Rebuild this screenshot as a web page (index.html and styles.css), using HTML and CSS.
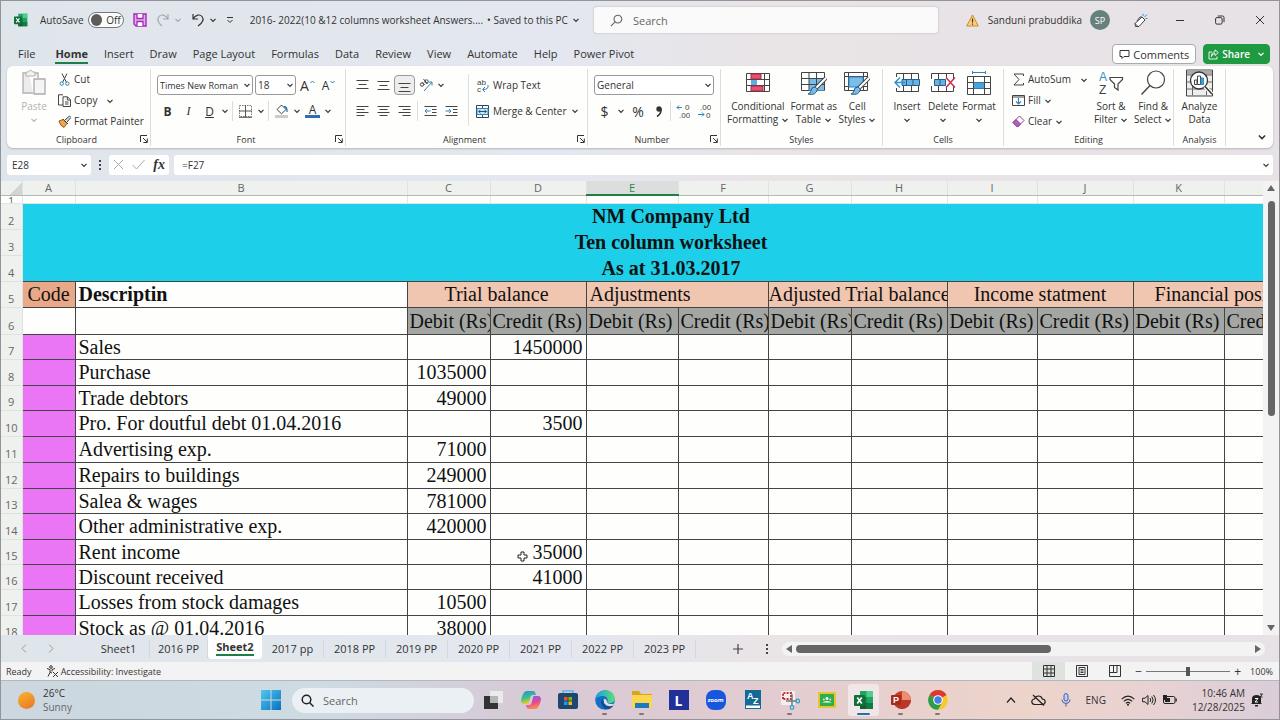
FILE: index.html
```html
<!DOCTYPE html>
<html lang="en">
<head>
    <meta charset="UTF-8">
    <title>2016- 2022(10 &amp;12 columns worksheet Answers - Excel</title>
    <link rel="stylesheet" href="styles.css">
</head>

<body>

<!-- shared icons -->
<svg class="sprite" aria-hidden="true">
    <symbol id="caret" viewBox="0 0 8 8"><path d="M1.5 2.8 4 5.3 6.5 2.8" fill="none" stroke="currentColor" stroke-width="1.2"/></symbol>
    <symbol id="launcher" viewBox="0 0 8 8"><path d="M.5 7V.5H7M3 3l4 4M7.300 3.500v4h-4" fill="none" stroke="currentColor"/></symbol>
    <symbol id="glass" viewBox="0 0 14 14"><circle cx="8.500" cy="5.500" r="4.200" fill="none" stroke="currentColor" stroke-width="1.200"/><path d="M5.500 8.500 1 13" stroke="currentColor" stroke-width="1.200"/></symbol>
    <symbol id="excel" viewBox="0 0 20 20">
        <path d="M6 1h13v18H6z" fill="#21a366"/><path d="M12.500 1H19v6h-6.500z" fill="#4fd08a"/><path d="M6 7h6.500v6H6zM12.500 13H19v6h-6.500z" fill="#107c41"/><path d="M6 13h6.500v6H6z" fill="#185c37"/>
        <rect y="5" width="11" height="11" rx="1" fill="#0f7038"/><path d="M3.200 7.500l4.600 6M7.800 7.500l-4.600 6" stroke="#fff" stroke-width="1.700"/>
    </symbol>
</svg>

<div class="window">

    <header class="titlebar">
        <div class="title-left">
            <svg class="app-icon" viewBox="0 0 20 20"><use href="#excel"/></svg>
            <label class="autosave">AutoSave <input type="checkbox"><span class="switch"><i></i>Off</span></label>
            <button class="qat save" aria-label="Save"><svg width="14" height="14" viewBox="0 0 14 14"><path d="M1 1h12v12H3l-2-2z" fill="#e7a9ef" stroke="#a02bb5" stroke-width="1.400"/><path d="M4 1v4.500h6V1M4 13V8.500h6V13" fill="#fff" stroke="#a02bb5" stroke-width="1.300"/></svg></button>
            <button class="qat muted" aria-label="Redo"><svg width="14" height="14" viewBox="0 0 14 14"><path d="M12 1v5H7M12 6C9.500 1.500 5 1 3 3.500S1.500 9 6 13" fill="none" stroke="currentColor" stroke-width="1.200"/></svg><svg class="caret"><use href="#caret"/></svg></button>
            <button class="qat" aria-label="Undo"><svg width="14" height="14" viewBox="0 0 14 14"><path d="M2 1v5h5M2 6c2.500-4.500 7-5 9-2.500S12.500 9 7 13" fill="none" stroke="currentColor" stroke-width="1.200"/></svg><svg class="caret"><use href="#caret"/></svg></button>
            <button class="qat" aria-label="Customize toolbar"><svg width="8" height="8" viewBox="0 0 8 8"><path d="M1 1.500h6M1.500 4 4 6.500 6.500 4" fill="none" stroke="currentColor"/></svg></button>
            <button class="doc-title"><span>2016- 2022(10 &amp;12 columns worksheet Answers....</span><span>• Saved to this PC</span><svg class="caret"><use href="#caret"/></svg></button>
        </div>
        <label class="search"><svg width="13" height="13"><use href="#glass"/></svg><input type="text" placeholder="Search" aria-label="Search"></label>
        <div class="title-right">
            <svg width="13" height="13" viewBox="0 0 13 13"><path d="M6.500 1 12.300 12H.7z" fill="#f8cf7e" stroke="#cf8a2c"/><path d="M6.500 4.500v4M6.500 9.500v1.200" stroke="#453312" stroke-width="1.200"/></svg>
            <span class="user">Sanduni prabuddika</span>
            <button class="avatar">SP</button>
            <button class="win" aria-label="What's new"><svg width="15" height="15" viewBox="0 0 15 15"><path d="M2 10.500 9 4l3 3-6 6.500H2.500zM2 10.500l3 3M9 4l-2 0-3 4" fill="#fff" stroke="#444"/><path d="M10 3V.8M11.500 4 14 1.500M12.500 5.500h2" stroke="#2d8fd0"/></svg></button>
            <button class="win" aria-label="Minimize"><svg width="10" height="10"><path d="M1 5.500h8" stroke="#333"/></svg></button>
            <button class="win" aria-label="Restore"><svg width="10" height="10" viewBox="0 0 10 10"><rect x=".6" y="2.600" width="6.500" height="6.500" rx="1.300" fill="none" stroke="#333"/><path d="M2.800 1h4.700Q9 1 9 2.500v4.700" fill="none" stroke="#333"/></svg></button>
            <button class="win" aria-label="Close"><svg width="10" height="10"><path d="M1 1l8 8M9 1 1 9" stroke="#333"/></svg></button>
        </div>
    </header>

    <nav class="menu">
        <button class="file">File</button>
        <button class="active">Home</button>
        <button>Insert</button>
        <button>Draw</button>
        <button>Page Layout</button>
        <button>Formulas</button>
        <button>Data</button>
        <button>Review</button>
        <button>View</button>
        <button>Automate</button>
        <button>Help</button>
        <button>Power Pivot</button>
        <div class="menu-right">
            <button class="comments"><svg width="11" height="11" viewBox="0 0 11 11"><path d="M1 1.500h9v6H5L3 9.500v-2H1z" fill="none" stroke="#333"/></svg>Comments</button>
            <button class="share"><svg width="11" height="11" viewBox="0 0 11 11"><path d="M4 3H1v7h8V7.500M3.500 7.500Q4 4.500 7 4.500V6.500L10.300 3.500 7 .8v2Q3.500 3 3.500 7.500z" fill="none" stroke="#fff" stroke-width=".9"/></svg>Share<svg class="caret"><use href="#caret"/></svg></button>
        </div>
    </nav>

    <section class="ribbon">
        <div class="group clipboard">
            <div class="tools">
                <button class="big paste"><svg width="26" height="28" viewBox="0 0 26 28"><path d="M8 4H2v20h10M17 9V4h-5" fill="#ececec" stroke="#b3b3b3" stroke-width="1.400"/><path d="M5 7V3h2.500q2-4 4 0H14v4z" fill="#f3f3f3" stroke="#b3b3b3"/><path d="M13 10h11v15H13z" fill="#f5f5f5" stroke="#aaa" stroke-width="1.300"/></svg>Paste<svg class="caret"><use href="#caret"/></svg></button>
                <div class="stack">
                    <button><svg width="13" height="13" viewBox="0 0 13 13"><path d="M4 .5l4.500 9M9 .5l-4.500 9" stroke="#444" fill="none"/><circle cx="3.700" cy="10.600" r="1.700" fill="none" stroke="#2d86bd"/><circle cx="9.300" cy="10.600" r="1.700" fill="none" stroke="#2d86bd"/></svg>Cut</button>
                    <button><svg width="13" height="13" viewBox="0 0 13 13"><path d="M5 11H.5V.8H5M5 2.800h4.500l3 3v6.700H5zM9.300 3v3h3M7 8h3.500M7 10h3.500" fill="none" stroke="#444"/></svg>Copy <svg class="caret far"><use href="#caret"/></svg></button>
                    <button><svg width="13" height="13" viewBox="0 0 13 13"><path d="M1 6l4-1.500L9 8.500 6 12.500Q2 11 1 6z" fill="#f3a64a" stroke="#9c5c1a"/><path d="M5 4l5 5M7 5l4.500-4L13 2.500 9 7" fill="#ddd" stroke="#444"/></svg>Format Painter</button>
                </div>
            </div>
            <footer>Clipboard<svg class="launch"><use href="#launcher"/></svg></footer>
        </div>

        <div class="group font">
            <div class="tools rows">
                <div class="line">
                    <span class="combo face"><select aria-label="Font"><option>Times New Roman</option></select><svg class="caret"><use href="#caret"/></svg></span>
                    <span class="combo size"><select aria-label="Font size"><option>18</option></select><svg class="caret"><use href="#caret"/></svg></span>
                    <button class="ic grow">A<svg width="5" height="12"><path d="M.5 4 2.500 2l2 2" fill="none" stroke="#2d86bd"/></svg></button>
                    <button class="ic">A<svg width="5" height="12"><path d="M.5 2l2 2 2-2" fill="none" stroke="#2d86bd"/></svg></button>
                </div>
                <div class="line">
                    <button class="ic"><b>B</b></button>
                    <button class="ic italic">I</button>
                    <button class="ic underline">D</button>
                    <button class="drop" aria-label="Underline options"><svg class="caret"><use href="#caret"/></svg></button>
                    <span class="sep"></span>
                    <button class="ic" aria-label="Borders"><svg width="13" height="13" viewBox="0 0 13 13"><path d="M.5.5h12v11H.5z" fill="none" stroke="#777" stroke-dasharray="1.500 1"/><path d="M6.500 0v12M0 6h13M0 12.300h13" stroke="#555"/></svg></button>
                    <button class="drop" aria-label="Border options"><svg class="caret"><use href="#caret"/></svg></button>
                    <span class="sep"></span>
                    <button class="ic" aria-label="Fill color"><svg width="14" height="14" viewBox="0 0 14 14"><path d="M6.500 1 11 5.500 6.500 9.800 2 5.500z" fill="#fff" stroke="#444"/><path d="M9 2.500q3.500.5 3 5.500" fill="none" stroke="#2778ae" stroke-width="1.300"/><path d="M0 11h13v3H0z" fill="#ccc"/></svg></button>
                    <button class="drop" aria-label="Fill options"><svg class="caret"><use href="#caret"/></svg></button>
                    <button class="ic fontcolor">A</button>
                    <button class="drop" aria-label="Font color options"><svg class="caret"><use href="#caret"/></svg></button>
                </div>
            </div>
            <footer>Font<svg class="launch"><use href="#launcher"/></svg></footer>
        </div>

        <div class="group align">
            <div class="tools">
                <div class="rows">
                    <div class="line">
                        <button class="ic" aria-label="Top align"><svg width="13" height="13"><path d="M.5 1.500h12M2.500 5.500h8M.5 9.500h12" stroke="#444"/></svg></button>
                        <button class="ic" aria-label="Middle align"><svg width="13" height="13"><path d="M.5 2.500h12M2.500 6.500h8M.5 10.500h12" stroke="#444"/></svg></button>
                        <button class="ic pressed" aria-label="Bottom align"><svg width="13" height="13"><path d="M.5 4.500h12M2.500 8.500h8M.5 12.500h12" stroke="#444"/></svg></button>
                        <button class="ic" aria-label="Orientation"><svg width="14" height="14" viewBox="0 0 14 14"><circle cx="3" cy="6.500" r="1.700" fill="none" stroke="#444"/><path d="M3.500 4.200 5.500 7M4.500 1l4 5" stroke="#444"/><circle cx="7.500" cy="3.500" r="1.700" fill="none" stroke="#444"/><path d="M5 13 13 4M9.500 4H13v3.500" fill="none" stroke="#2d86bd"/></svg></button>
                        <button class="drop" aria-label="Orientation options"><svg class="caret"><use href="#caret"/></svg></button>
                    </div>
                    <div class="line">
                        <button class="ic" aria-label="Align left"><svg width="13" height="13"><path d="M.5 1.500h12M.5 4.500h8M.5 7.500h12M.5 10.500h8" stroke="#444"/></svg></button>
                        <button class="ic" aria-label="Center"><svg width="13" height="13"><path d="M.5 1.500h12M2.500 4.500h8M.5 7.500h12M2.500 10.500h8" stroke="#444"/></svg></button>
                        <button class="ic" aria-label="Align right"><svg width="13" height="13"><path d="M.5 1.500h12M4.500 4.500h8M.5 7.500h12M4.500 10.500h8" stroke="#444"/></svg></button>
                        <span class="sep"></span>
                        <button class="ic" aria-label="Decrease indent"><svg width="13" height="13"><path d="M.5 1.500h12M8 4.500h4.500M8 7.500h4.500M.5 10.500h12" stroke="#444"/><path d="M6.500 6H1M3 4 1 6l2 2" fill="none" stroke="#2d86bd"/></svg></button>
                        <button class="ic" aria-label="Increase indent"><svg width="13" height="13"><path d="M.5 1.500h12M8 4.500h4.500M8 7.500h4.500M.5 10.500h12" stroke="#444"/><path d="M.5 6H6M4 4l2 2-2 2" fill="none" stroke="#2d86bd"/></svg></button>
                    </div>
                </div>
                <span class="sep tall"></span>
                <div class="rows wide">
                    <div class="line"><button><svg width="13" height="13" viewBox="0 0 13 13"><text x="1" y="6" font-size="8" fill="#444">ab</text><text x="1" y="13" font-size="8" fill="#444">c</text><path d="M12 6q1 4.500-5 4.500M9 8l-2.500 2.500L9 13" fill="none" stroke="#2d86bd"/></svg>Wrap Text</button></div>
                    <div class="line"><button><svg width="13" height="13" viewBox="0 0 13 13"><path d="M.5.5h12v12H.5z" fill="#fff" stroke="#345"/><path d="M1 3.500h11v6H1z" fill="#cfe8f5" stroke="#2d86bd"/><path d="M2.500 6.500h8M4.500 4.800 2.800 6.500l1.700 1.700M8.500 4.800l1.700 1.700-1.700 1.700M6.500 1v2M6.500 10v2" fill="none" stroke="#27516e"/></svg>Merge &amp; Center <svg class="caret"><use href="#caret"/></svg></button></div>
                </div>
            </div>
            <footer>Alignment<svg class="launch"><use href="#launcher"/></svg></footer>
        </div>

        <div class="group number">
            <div class="tools rows">
                <div class="line"><span class="combo format"><select aria-label="Number format"><option>General</option></select><svg class="caret"><use href="#caret"/></svg></span></div>
                <div class="line">
                    <button class="ic sym">$</button>
                    <button class="drop" aria-label="Accounting options"><svg class="caret"><use href="#caret"/></svg></button>
                    <button class="ic sym">%</button>
                    <button class="ic" aria-label="Comma style"><svg width="8" height="13" viewBox="0 0 8 13"><circle cx="4" cy="4" r="2.700" fill="#333"/><path d="M6 3.500q.8 5-4 8" fill="none" stroke="#333" stroke-width="1.500"/></svg></button>
                    <span class="sep"></span>
                    <button class="ic" aria-label="Increase decimal"><svg width="14" height="14" viewBox="0 0 14 14"><path d="M6 3.500H1M3 1.500l-2 2 2 2" fill="none" stroke="#2d86bd"/><text x="9" y="6" font-size="8" fill="#444">0</text><text x="3" y="14" font-size="8" fill="#444">.00</text></svg></button>
                    <button class="ic" aria-label="Decrease decimal"><svg width="14" height="14" viewBox="0 0 14 14"><path d="M1 10.500h6M5 8.500l2 2-2 2" fill="none" stroke="#2d86bd"/><text x="3" y="6" font-size="8" fill="#444">.00</text><text x="9" y="14" font-size="8" fill="#444">0</text></svg></button>
                </div>
            </div>
            <footer>Number<svg class="launch"><use href="#launcher"/></svg></footer>
        </div>

        <div class="group styles">
            <div class="tools">
                <button class="big"><svg width="24" height="22" viewBox="0 0 24 22"><path d="M.5 1.500h23v18H.5z" fill="#fff" stroke="#444"/><path d="M.5 7.500h23M.5 13.500h23M5.500 1v18M18.500 1v18" stroke="#444"/><path d="M5 2h10v5H5zM5 14h12v5H5z" fill="#e85070" stroke="#a22a48"/><path d="M5 8h6v5H5z" fill="#5aaee0"/></svg><span>Conditional<br>Formatting <svg class="caret"><use href="#caret"/></svg></span></button>
                <button class="big"><svg width="26" height="24" viewBox="0 0 26 24"><path d="M.5 1.500h23v18H.5z" fill="#fff" stroke="#444"/><path d="M8 7.500h15v12H8z" fill="#79bdea"/><path d="M.5 7.500h23M.5 13.500h23M8 1v18M15.500 1v18" stroke="#444"/><path d="M25 7 14 18" stroke="#444" stroke-width="4"/><path d="M25 7 14 18" stroke="#fff" stroke-width="2.200"/><path d="M14 16q-4 0-4 4-1 2.500-3 3 8 2 9.500-5z" fill="#79bdea" stroke="#255f8a"/></svg><span>Format as<br>Table <svg class="caret"><use href="#caret"/></svg></span></button>
                <button class="big"><svg width="26" height="24" viewBox="0 0 26 24"><path d="M.5 1.500h23v18H.5z" fill="#fff" stroke="#444"/><path d="M.5 5.500h23M4.500 1v18M19.500 1v18M.5 15.500h23" stroke="#444"/><path d="M5 6h14v10H5z" fill="#79bdea" stroke="#2d86bd"/><path d="M25 7 14 18" stroke="#444" stroke-width="4"/><path d="M25 7 14 18" stroke="#fff" stroke-width="2.200"/><path d="M14 16q-4 0-4 4-1 2.500-3 3 8 2 9.500-5z" fill="#79bdea" stroke="#255f8a"/></svg><span>Cell<br>Styles <svg class="caret"><use href="#caret"/></svg></span></button>
            </div>
            <footer>Styles</footer>
        </div>

        <div class="group cells">
            <div class="tools">
                <button class="big"><svg width="26" height="22" viewBox="0 0 26 22"><path d="M2.500 1.500h22v18h-22zM9.500 1v18M17.500 1v18" fill="#fff" stroke="#444"/><path d="M8 7.500h17.500v6H8z" fill="#66b4e6" stroke="#2a5d80"/><path d="M12.500 7.500v6M19 7.500v6" stroke="#2a5d80"/><path d="M0 5h7v11H0z" fill="#fff"/><path d="M11 10.500H1M6 5.500l-5 5 5 5" fill="none" stroke="#2d93cf" stroke-width="1.500"/></svg><span>Insert<br><svg class="caret"><use href="#caret"/></svg></span></button>
                <button class="big"><svg width="26" height="22" viewBox="0 0 26 22"><path d="M1.500 1.500h22v18h-22zM8.500 1v18M16.500 1v18" fill="#fff" stroke="#444"/><path d="M0 7h24v7H0z" fill="#fff"/><path d="M4.500 7.500h11v6h-11zM10 7.500v6" fill="#66b4e6" stroke="#2a5d80"/><path d="M16 5.500l9 10M25 5.500l-9 10" stroke="#c8324f" stroke-width="1.500"/></svg><span>Delete<br><svg class="caret"><use href="#caret"/></svg></span></button>
                <button class="big"><svg width="24" height="24" viewBox="0 0 24 24"><path d="M.5 5.500h23v18H.5zM.5 11.500h23M.5 17.500h23M6.500 5v18M17.500 5v18" fill="#fff" stroke="#444"/><path d="M7 11.500h10v6H7z" fill="#45a5e2"/><path d="M5.500 1.500h13M5.500 0v3M18.500 0v3" stroke="#2d86bd"/></svg><span>Format<br><svg class="caret"><use href="#caret"/></svg></span></button>
            </div>
            <footer>Cells</footer>
        </div>

        <div class="group editing">
            <div class="tools">
                <div class="stack">
                    <button><svg width="13" height="13" viewBox="0 0 13 13"><path d="M11.500 3V1H2l5 5.500L2 12h9.500v-2" fill="none" stroke="#444"/></svg>AutoSum <svg class="caret far"><use href="#caret"/></svg></button>
                    <button><svg width="13" height="13" viewBox="0 0 13 13"><path d="M.5 1.500h12v10H.5zM.5 3h12" fill="#fff" stroke="#444"/><path d="M6.500 4v6M4 7.500 6.500 10 9 7.500" fill="none" stroke="#2d86bd" stroke-width="1.200"/></svg>Fill <svg class="caret"><use href="#caret"/></svg></button>
                    <button><svg width="13" height="13" viewBox="0 0 13 13"><path d="M7.500 1 12 5.500 5.500 12 1 7.500z" fill="#fff" stroke="#8a3a9c"/><path d="M4 4.500 8.500 9l-3 3L1 7.500z" fill="#b55cc6" stroke="#8a3a9c"/></svg>Clear <svg class="caret"><use href="#caret"/></svg></button>
                </div>
                <button class="big"><svg width="26" height="24" viewBox="0 0 26 24"><text x="1" y="10" font-size="12" fill="#2d93cf">A</text><text x="1" y="23" font-size="12" fill="#444">Z</text><path d="M12 6.500h12.500v2L20 13v6l-3.500-2.500V13L12 8.500z" fill="#fff" stroke="#444" stroke-width="1.200"/></svg><span>Sort &amp;<br>Filter <svg class="caret"><use href="#caret"/></svg></span></button>
                <button class="big"><svg width="26" height="26" viewBox="0 0 26 26"><circle cx="16" cy="9.500" r="8.500" fill="#fff" stroke="#444" stroke-width="1.200"/><path d="M10 15.500 1.500 24.500" stroke="#444" stroke-width="1.400"/></svg><span>Find &amp;<br>Select <svg class="caret"><use href="#caret"/></svg></span></button>
            </div>
            <footer>Editing</footer>
        </div>

        <div class="group analysis">
            <div class="tools">
                <button class="big"><svg width="27" height="27" viewBox="0 0 27 27"><path d="M.5.500h26v26H.5z" fill="#eee" stroke="#444"/><path d="M1 1h25v4H1z" fill="#aaa"/><path d="M.5 5.500h26M.5 12.500h26M.5 19.500h26M6.500 5v21M20.500 5v21" stroke="#666"/><circle cx="13" cy="11" r="8.500" fill="#fff" stroke="#333" stroke-width="1.300"/><path d="M19 17l7 7.500" stroke="#fff" stroke-width="4"/><path d="M19 17l7 7.500" stroke="#333" stroke-width="1.500"/><path d="M8.500 10.500h2.500V15H8.500z" fill="#fff" stroke="#444"/><path d="M11.500 6.500h3V15h-3z" fill="#fff" stroke="#444"/><path d="M15 8.500h2.500V15H15z" fill="#45a5e2" stroke="#2d86bd"/></svg><span>Analyze<br>Data</span></button>
            </div>
            <footer>Analysis</footer>
        </div>
        <button class="collapse" aria-label="Collapse ribbon"><svg width="10" height="10" viewBox="0 0 8 8"><use href="#caret"/></svg></button>
    </section>

    <div class="formula-bar">
        <span class="combo namebox"><input type="text" value="E28" aria-label="Name box"><svg class="caret"><use href="#caret"/></svg></span>
        <span class="dots"></span>
        <div class="fx">
            <button aria-label="Cancel"><svg width="11" height="11"><path d="M1 1l9 9M10 1l-9 9" stroke="#aaa"/></svg></button>
            <button aria-label="Enter"><svg width="13" height="11"><path d="M.5 6 4.500 10 12.500 1" fill="none" stroke="#aaa"/></svg></button>
            <button class="fn">fx</button>
        </div>
        <span class="combo formula"><input type="text" value="=F27" aria-label="Formula"><svg class="caret"><use href="#caret"/></svg></span>
    </div>

    <main class="sheet">
        <div class="grid-area">
            <table class="grid">
                <colgroup>
                    <col class="w-num"><col class="w-a"><col class="w-b"><col class="w-c"><col class="w-d"><col class="w-e"><col class="w-f"><col class="w-c"><col class="w-d"><col class="w-f"><col class="w-d"><col class="w-k"><col class="w-d">
                </colgroup>
                <thead>
                    <tr><th class="corner"></th><th>A</th><th>B</th><th>C</th><th>D</th><th class="current">E</th><th>F</th><th>G</th><th>H</th><th>I</th><th>J</th><th>K</th><th>L</th></tr>
                </thead>
                <tbody>
                    <tr class="first"><th>1</th><td></td><td></td><td></td><td></td><td></td><td></td><td></td><td></td><td></td><td></td><td></td><td></td></tr>
                    <tr class="heading"><th>2</th><td colspan="12">NM Company Ltd</td></tr>
                    <tr class="heading"><th>3</th><td colspan="12">Ten column worksheet</td></tr>
                    <tr class="heading last"><th>4</th><td colspan="12">As at 31.03.2017</td></tr>
                    <tr class="sections"><th>5</th><td class="code">Code</td><td class="desc">Descriptin</td><td colspan="2">Trial balance</td><td colspan="2" class="left">Adjustments</td><td colspan="2" class="tight">Adjusted Trial balance</td><td colspan="2">Income statment</td><td colspan="2">Financial position</td></tr>
                    <tr class="sides"><th>6</th><td></td><td></td><td>Debit (Rs)</td><td>Credit (Rs)</td><td>Debit (Rs)</td><td>Credit (Rs)</td><td>Debit (Rs)</td><td>Credit (Rs)</td><td>Debit (Rs)</td><td>Credit (Rs)</td><td>Debit (Rs)</td><td>Credit (Rs)</td></tr>
                    <tr><th>7</th><td></td><td>Sales</td><td></td><td>1450000</td><td></td><td></td><td></td><td></td><td></td><td></td><td></td><td></td></tr>
                    <tr class="high"><th>8</th><td></td><td>Purchase</td><td>1035000</td><td></td><td></td><td></td><td></td><td></td><td></td><td></td><td></td><td></td></tr>
                    <tr><th>9</th><td></td><td>Trade debtors</td><td>49000</td><td></td><td></td><td></td><td></td><td></td><td></td><td></td><td></td><td></td></tr>
                    <tr class="high"><th>10</th><td></td><td>Pro. For doutful debt 01.04.2016</td><td></td><td>3500</td><td></td><td></td><td></td><td></td><td></td><td></td><td></td><td></td></tr>
                    <tr class="high"><th>11</th><td></td><td>Advertising exp.</td><td>71000</td><td></td><td></td><td></td><td></td><td></td><td></td><td></td><td></td><td></td></tr>
                    <tr class="high"><th>12</th><td></td><td>Repairs to buildings</td><td>249000</td><td></td><td></td><td></td><td></td><td></td><td></td><td></td><td></td><td></td></tr>
                    <tr><th>13</th><td></td><td>Salea &amp; wages</td><td>781000</td><td></td><td></td><td></td><td></td><td></td><td></td><td></td><td></td><td></td></tr>
                    <tr class="high"><th>14</th><td></td><td>Other administrative exp.</td><td>420000</td><td></td><td></td><td></td><td></td><td></td><td></td><td></td><td></td><td></td></tr>
                    <tr><th>15</th><td></td><td>Rent income</td><td></td><td>35000</td><td></td><td></td><td></td><td></td><td></td><td></td><td></td><td></td></tr>
                    <tr><th>16</th><td></td><td>Discount received</td><td></td><td>41000</td><td></td><td></td><td></td><td></td><td></td><td></td><td></td><td></td></tr>
                    <tr class="high"><th>17</th><td></td><td>Losses from stock damages</td><td>10500</td><td></td><td></td><td></td><td></td><td></td><td></td><td></td><td></td><td></td></tr>
                    <tr><th>18</th><td></td><td>Stock as @ 01.04.2016</td><td>38000</td><td></td><td></td><td></td><td></td><td></td><td></td><td></td><td></td><td></td></tr>
                </tbody>
            </table>
            <svg class="cursor" width="11" height="11" viewBox="0 0 11 11"><path d="M4 1h3v3h3v3H7v3H4V7H1V4h3z" fill="#fff" stroke="#222"/></svg>
        </div>
        <div class="vscroll"><svg width="8" height="6"><path d="M4 0l4 6H0z" fill="#666"/></svg><span class="track"><i></i></span><svg width="8" height="6"><path d="M0 0h8L4 6z" fill="#666"/></svg></div>
    </main>

    <div class="sheet-tabs">
        <div class="arrows"><button aria-label="Previous sheet"><svg width="6" height="9"><path d="M5 .5l-4 4 4 4" fill="none" stroke="#999"/></svg></button><button aria-label="Next sheet"><svg width="6" height="9"><path d="M1 .5l4 4-4 4" fill="none" stroke="#999"/></svg></button></div>
        <button>Sheet1</button>
        <button>2016 PP</button>
        <button class="active"><span>Sheet2</span></button>
        <button>2017 pp</button>
        <button>2018 PP</button>
        <button>2019 PP</button>
        <button>2020 PP</button>
        <button>2021 PP</button>
        <button>2022 PP</button>
        <button>2023 PP</button>
        <button class="add" aria-label="New sheet"><svg width="10" height="10"><path d="M5 0v10M0 5h10" stroke="#444" stroke-width="1.200"/></svg></button>
        <span class="dots"></span>
        <div class="hscroll"><svg width="6" height="8"><path d="M6 0v8L0 4z" fill="#666"/></svg><span class="track"><i></i></span><svg width="6" height="8"><path d="M0 0v8l6-4z" fill="#666"/></svg></div>
    </div>

    <div class="status">
        <span>Ready</span>
        <button class="access"><svg width="13" height="12" viewBox="0 0 13 12"><circle cx="5" cy="2" r="1.300" fill="none" stroke="#333"/><path d="M1 3.500l3 1v3l-2 4M9 3.500l-3 1v2M4 7l2 1M7 7l5 5M12 7l-5 5" fill="none" stroke="#333"/></svg>Accessibility: Investigate</button>
        <div class="views">
            <button class="on" aria-label="Normal"><svg width="12" height="12"><path d="M.5.5h11v11H.5zM4 0v12M8 0v12M0 4h12M0 8h12" fill="none" stroke="#333"/></svg></button>
            <button aria-label="Page layout"><svg width="12" height="12"><path d="M.5.5h11v11H.5zM3 2.500h6v7H3zM4.500 4.500h3M4.500 6h3M4.500 7.500h3" fill="none" stroke="#333"/></svg></button>
            <button aria-label="Page break"><svg width="12" height="12"><path d="M.5.5h11v11H.5zM.5 7.500h7.500V.5M4.500.5v7" fill="none" stroke="#333"/></svg></button>
        </div>
        <div class="zoom"><button>−</button><input type="range" min="10" max="190" value="100" aria-label="Zoom"><button>+</button></div>
        <span class="percent">100%</span>
    </div>

    <footer class="taskbar">
        <button class="weather"><i class="sun"></i><span>26°C<br><em>Sunny</em></span></button>
        <div class="apps">
            <button class="app" aria-label="Start"><svg width="20" height="20" viewBox="0 0 20 20"><defs><linearGradient id="w" x2="1" y2="1"><stop stop-color="#4fc9ee"/><stop offset="1" stop-color="#0b6fc0"/></linearGradient></defs><path d="M0 0h9.500v9.500H0zM10.500 0H20v9.500h-9.500zM0 10.500h9.500V20H0zM10.500 10.500H20V20h-9.500z" fill="url(#w)"/></svg></button>
            <label class="task-search"><svg width="13" height="13" viewBox="0 0 13 13"><circle cx="5.500" cy="5.500" r="4.300" fill="none" stroke="#222" stroke-width="1.500"/><path d="M8.700 8.700l3.800 3.800" stroke="#222" stroke-width="1.500"/></svg><input type="text" placeholder="Search" aria-label="Search Windows"></label>
            <button class="app" aria-label="Task view"><svg width="20" height="20" viewBox="0 0 20 20"><path d="M0 6h14v13H0z" fill="#333"/><path d="M6 1h13v12H6z" fill="#eee" opacity=".9"/><path d="M6 6h8v7H6z" fill="#b5b5b5"/></svg></button>
            <button class="app" aria-label="Copilot"><svg width="20" height="20" viewBox="0 0 20 20"><defs><linearGradient id="c1" x2=".3" y2="1"><stop stop-color="#1f8ee8"/><stop offset=".6" stop-color="#42c47c"/><stop offset="1" stop-color="#f4c92d"/></linearGradient><linearGradient id="c2" x2=".3" y2="1"><stop stop-color="#7a5cf0"/><stop offset=".6" stop-color="#e5489a"/><stop offset="1" stop-color="#fa8a4a"/></linearGradient></defs><path d="M6 1h6q2 0 2.500 2L15 5h-3q-2 0-2.500 2L7.500 14H3Q0 14 0 10.500 1 5 3 2.500 4 1 6 1z" fill="url(#c1)"/><path d="M14 19H8q-2 0-2.500-2L5 15h3q2 0 2.500-2l2-7H17q3 0 3 3.500-1 5.500-3 8-1 1.500-3 1.500z" fill="url(#c2)"/></svg></button>
            <button class="app" aria-label="Store"><svg width="20" height="20" viewBox="0 0 20 20"><path d="M5 5V1h10v4" fill="none" stroke="#55b6e8" stroke-width="1.600"/><rect y="3" width="20" height="16" rx="2" fill="#1d4770"/><path d="M6 7h3.500v3.500H6z" fill="#f25022"/><path d="M10.500 7H14v3.500h-3.500z" fill="#7fba00"/><path d="M6 11.500h3.500V15H6z" fill="#00a4ef"/><path d="M10.500 11.500H14V15h-3.500z" fill="#ffb900"/></svg></button>
            <button class="app run" aria-label="Edge"><svg width="20" height="20" viewBox="0 0 20 20"><defs><linearGradient id="e" x2="1"><stop stop-color="#1b9de2"/><stop offset="1" stop-color="#5ddf73"/></linearGradient></defs><circle cx="10" cy="10" r="9.800" fill="#1470c4"/><path d="M.4 9C1.500-2 19-3 19.800 8.500 20 13 15 14 12 12.500c2-4-1-6.500-4-6.500C4 6 1 8 .4 9z" fill="url(#e)"/><path d="M7.500 8.500C4 12 7 19 13 19.300 16 19 18 16.500 18.500 15c-4 2-10 1-9.500-4.500z" fill="#0d4f9c"/><path d="M8.500 9.500q3-2 3.500 3 3 2.500 7 1l-.7 2q-6 2-9-2z" fill="#e9dce0"/></svg></button>
            <button class="app run" aria-label="File Explorer"><svg width="20" height="20" viewBox="0 0 20 20"><path d="M0 1h7l2 3h11v14H0z" fill="#d9a41e"/><path d="M0 5h20v13H0z" fill="#fbd64e"/><path d="M3 13h14v5H3z" fill="#1d78c2"/></svg></button>
            <button class="app" aria-label="L"><span class="tile blue">L</span></button>
            <button class="app" aria-label="Zoom"><span class="tile zoomapp">zoom</span></button>
            <button class="app" aria-label="Dictionary"><svg width="16" height="20" viewBox="0 0 16 20"><path d="M0 0h16v19H0z" fill="#146a96"/><path d="M1 15.500h14V18H1z" fill="#fff"/><text x="2" y="9" font-size="9" font-weight="700" fill="#fff">A</text><text x="8" y="14" font-size="9" font-weight="700" fill="#fff">Z</text></svg></button>
            <button class="app run" aria-label="Snipping Tool"><svg width="20" height="20" viewBox="0 0 20 20"><rect x="1" y="1" width="14" height="14" rx="1" fill="#f5f0f0"/><path d="M3 9V3h8v6H3z" fill="none" stroke="#c4303a" stroke-width="2" stroke-dasharray="2 1.200"/><path d="M12 4v11M6 11h11" stroke="#777" stroke-width="1.500"/><circle cx="17.700" cy="11" r="1.800" fill="none" stroke="#2c9fd0" stroke-width="1.200"/><circle cx="12" cy="17.500" r="1.800" fill="none" stroke="#2c9fd0" stroke-width="1.200"/></svg></button>
            <button class="app" aria-label="Classroom"><svg width="18" height="16" viewBox="0 0 18 16"><path d="M0 0h18v16H0z" fill="#e8c52a"/><path d="M2 2h14v12H2z" fill="#2fae4e"/><circle cx="9" cy="6.500" r="1.400" fill="#fff"/><circle cx="5.800" cy="7.500" r="1" fill="#cfeecf"/><circle cx="12.200" cy="7.500" r="1" fill="#cfeecf"/><path d="M4 10.500q5-3 10 0z" fill="#fff"/></svg></button>
            <button class="app run current" aria-label="Excel"><svg width="20" height="20"><use href="#excel"/></svg></button>
            <button class="app run" aria-label="PowerPoint"><svg width="20" height="20" viewBox="0 0 20 20"><circle cx="11" cy="10" r="9" fill="#c43e2c"/><path d="M11 1a9 9 0 0 1 9 9h-9z" fill="#f08b72"/><path d="M2 10h18a9 9 0 0 1-18 0z" fill="#b8382c"/><rect y="5" width="10" height="10" rx="1" fill="#a82a1e"/><text x="2" y="13" font-size="9" font-weight="700" fill="#fff">P</text></svg></button>
            <button class="app run" aria-label="Chrome"><svg width="20" height="20" viewBox="0 0 20 20"><circle cx="10" cy="10" r="9.800" fill="#f8c92b"/><path d="M10 10 1.500 5A9.800 9.800 0 0 1 18.500 5z" fill="#dc3a30"/><path d="M10 10 1.500 5A9.800 9.800 0 0 0 10 19.800l4-7z" fill="#2f9c4b"/><circle cx="10" cy="10" r="4.800" fill="#fff"/><circle cx="10" cy="10" r="3.700" fill="#3f7fe8"/></svg></button>
        </div>
        <div class="tray">
            <button aria-label="Hidden icons"><svg width="10" height="6"><path d="M1 5.500 5 1l4 4.500" fill="none" stroke="#222" stroke-width="1.200"/></svg></button>
            <button aria-label="OneDrive"><svg width="15" height="12" viewBox="0 0 15 12"><path d="M3.500 10.500Q.7 10 .8 7.500 1 5.300 3.500 5 4.500 2 7.500 2q3 0 3.800 3 2.900.3 2.900 2.800 0 2.500-2.700 2.700zM2 1l11 10.500" fill="none" stroke="#222" stroke-width="1.200"/></svg></button>
            <button aria-label="Microphone"><svg width="10" height="14" viewBox="0 0 10 14"><rect x="3" y=".6" width="4" height="7.500" rx="2" fill="#bcd0f0" stroke="#3a5fae"/><path d="M.8 6.500q.5 4 4.200 4t4.200-4M5 10.500v3" fill="none" stroke="#3a5fae"/></svg></button>
            <button class="lang">ENG</button>
            <button class="net" aria-label="Network"><svg width="14" height="11" viewBox="0 0 14 11"><path d="M.7 4.200q6.300-6 12.600 0M2.800 6.400q4.200-4 8.400 0M4.800 8.400q2.200-2 4.400 0" fill="none" stroke="#222" stroke-width="1.100"/><circle cx="7" cy="9.800" r="1" fill="#222"/></svg><svg width="14" height="12" viewBox="0 0 14 12"><path d="M.6 4.200H3L6 1.500v9L3 7.800H.6zM8 4q1.500 2 0 4M9.800 2.500q2.700 3.500 0 7M11.500 1q4 5 0 10" fill="none" stroke="#222"/></svg><svg width="14" height="10" viewBox="0 0 14 10"><rect x=".5" y="1.500" width="11.500" height="7" rx="1.500" fill="none" stroke="#222"/><path d="M2 3h5v4H2zM12.500 3.500h1.300v3h-1.300zM0 0h4v5H0z" fill="#222"/></svg></button>
            <button class="clock">10:46 AM<br>12/28/2025</button>
            <button aria-label="Notifications"><svg width="12" height="14" viewBox="0 0 12 14"><path d="M1 10V5.500Q1 2 5.500 2T10 5.500V10l1 1H0zM4 12h3v1.500H4z" fill="#222"/><path d="M4 5.500h3L4 9h3" fill="none" stroke="#fff"/><path d="M9 1h2.500L9 4h2.500" fill="none" stroke="#222"/></svg></button>
        </div>
    </footer>

</div>

</body>
</html>
```
FILE: styles.css
```css
* {
    box-sizing: border-box;
}

body {
    margin: 0;
    font-family: "Open Sans", "Noto Sans", sans-serif;
    font-size: 11px;
    color: #333;
}

button,
input,
select {
    font: inherit;
    color: inherit;
    border: 0;
    padding: 0;
    margin: 0;
    background: none;
}

button {
    display: flex;
    align-items: center;
    white-space: nowrap;
}

input {
    min-width: 0;
    outline: none;
}

svg {
    flex: none;
    display: block;
}

svg text {
    font-family: "Liberation Sans", sans-serif;
}

.sprite {
    position: absolute;
    width: 0;
    height: 0;
}

.caret {
    width: 8px;
    height: 8px;
}

.window {
    display: flex;
    flex-direction: column;
    height: 100vh;
    overflow: hidden;
    border: 1px solid #92949a;
    background: linear-gradient(90deg, #dfe6eb 0%, #e4e7ef 45%, #e9e4e6 60%, #e6e2e6 100%);
}

/* title bar */
.titlebar {
    flex: none;
    display: flex;
    align-items: center;
    height: 38px;
    padding: 0 13px;
}

.title-left {
    display: flex;
    align-items: center;
    width: 580px;
    font-size: 10px;
}

.app-icon {
    width: 14px;
    height: 14px;
    margin-right: 12px;
}

.autosave {
    display: flex;
    align-items: center;
    gap: 4px;
}

.autosave input {
    position: absolute;
    opacity: 0;
}

.switch {
    display: flex;
    align-items: center;
    gap: 4px;
    width: 36px;
    height: 16px;
    padding: 0 2px;
    border: 1px solid #777;
    border-radius: 8px;
    background: #fbfbfb;
}

.switch i {
    width: 12px;
    height: 12px;
    border-radius: 50%;
    background: #5c5c5c;
}

.qat {
    gap: 4px;
    margin-left: 9px;
}

.qat.muted {
    color: #a3a8ad;
}

.doc-title {
    gap: 4px;
    margin-left: 16px;
}

.search {
    display: flex;
    align-items: center;
    gap: 10px;
    flex: 0 1 344px;
    height: 26px;
    padding: 0 16px;
    border-radius: 3px;
    background: #fafafb;
    box-shadow: 0 0 2px #aaa;
    color: #666;
}

.search input {
    flex: 1;
}

::placeholder {
    color: #666;
    opacity: 1;
}

.title-right {
    display: flex;
    align-items: center;
    justify-content: flex-end;
    flex: 1;
}

.user {
    margin: 0 8px 0 9px;
    font-size: 10px;
}

.avatar {
    justify-content: center;
    width: 20px;
    height: 20px;
    margin-right: 10px;
    border-radius: 50%;
    background: #66807b;
    color: #fff;
    font-size: 9px;
}

.win {
    justify-content: center;
    width: 40px;
    height: 24px;
}

.win:last-child {
    margin-right: -14px;
}

/* menu tabs */
.menu {
    flex: none;
    display: flex;
    align-items: center;
    gap: 16px;
    height: 27px;
    padding: 3px 9px 0 17px;
}

.menu > button {
    height: 20px;
    border-bottom: 2px solid transparent;
}

.menu > .file {
    margin-right: 4px;
}

.menu > .active {
    font-weight: 700;
    border-color: #1e7e45;
}

.menu-right {
    display: flex;
    gap: 7px;
    margin-left: auto;
}

.comments,
.share {
    height: 20px;
    gap: 3px;
    padding: 0 6px;
    border: 1px solid #aaa;
    border-radius: 4px;
    background: #fff;
}

.share {
    padding: 0 4px;
    border-color: #1f9a42;
    background: #1f9a42;
    color: #fff;
    font-size: 10px;
    font-weight: 600;
}

.share .caret {
    margin-left: 4px;
}

/* ribbon */
.ribbon {
    flex: none;
    display: grid;
    grid-template-columns: 144px 195px 242px 133px 162px 121px 170px 52px 1fr;
    height: 82px;
    margin: 0 6px;
    border-radius: 6px;
    background: #fefefc;
    box-shadow: 0 1px 2px #b5b5bb;
    font-size: 10px;
    line-height: 13px;
}

.group {
    display: flex;
    flex-direction: column;
    justify-content: space-between;
    margin: 3px 0 4px;
    padding: 0 6px;
    border-right: 1px solid #ddd;
}

.group footer {
    display: grid;
    grid-template-columns: 1fr auto;
    align-items: center;
    height: 14px;
    font-size: 9px;
    text-align: center;
    white-space: nowrap;
}

.launch {
    width: 8px;
    height: 8px;
    margin-right: -4px;
}

.tools {
    display: flex;
}

.stack {
    display: flex;
    flex-direction: column;
}

.stack button {
    height: 21px;
    gap: 3px;
}

.far {
    margin-left: 6px;
}

.rows {
    display: flex;
    flex-direction: column;
    gap: 6px;
    padding-top: 6px;
}

.line {
    display: flex;
    align-items: center;
    height: 20px;
}

.line button {
    gap: 4px;
}

.line .ic {
    gap: 1px;
}

.ic {
    justify-content: center;
    width: 21px;
    height: 20px;
    font-size: 12px;
}

.drop {
    justify-content: center;
    width: 10px;
    height: 20px;
}

.sep {
    width: 1px;
    height: 20px;
    margin: 0 2px;
    background: #ddd;
}

.tall {
    height: 52px;
    margin: 5px 7px 0 6px;
}

.pressed {
    border: 1px solid #999;
    border-radius: 4px;
    background: #eee;
}

.italic {
    font-family: "Liberation Serif", serif;
    font-style: italic;
}

.underline {
    text-decoration: underline;
}

.fontcolor {
    width: 15px;
    height: 14px;
    margin: 0 3px;
    border-bottom: 3px solid #2f6fb0;
}

.grow,
.sym {
    font-size: 14px;
}

.number .drop {
    width: 13px;
}

.number .sep {
    margin: 0 1px;
}

.combo {
    display: grid;
    align-items: center;
    height: 20px;
    border: 1px solid #999;
    border-radius: 3px;
    background: #fff;
}

.combo > * {
    grid-area: 1 / 1;
}

.combo select,
.combo input {
    appearance: none;
    width: 100%;
    padding-left: 2px;
}

.combo .caret {
    justify-self: end;
    margin-right: 1px;
}

.face {
    width: 96px;
    margin-right: 2px;
    font-size: 9px;
}

.size {
    width: 41px;
    margin-right: 1px;
}

.format {
    width: 120px;
}

.big {
    flex-direction: column;
    gap: 3px;
    text-align: center;
}

.big > svg:first-child {
    height: 28px;
}

.big .caret {
    display: inline-block;
    vertical-align: middle;
}

.paste {
    width: 40px;
    margin-left: 1px;
    color: #b3b3b3;
}

.clipboard .stack {
    padding-left: 4px;
}

.styles .tools,
.cells .tools {
    justify-content: space-between;
}

.cells .big {
    width: 36px;
}

.editing .tools {
    gap: 6px;
}

.editing .stack {
    width: 78px;
    padding-left: 2px;
}

.analysis .big {
    width: 39px;
}

.collapse {
    align-self: end;
    justify-self: end;
    margin: 0 6px 8px 0;
}

/* formula bar */
.formula-bar {
    flex: none;
    display: flex;
    align-items: center;
    height: 33px;
    padding: 0 6px;
    font-size: 10px;
}

.formula-bar .combo {
    border: 0;
}

.formula-bar .combo input {
    padding-left: 5px;
}

.formula-bar .combo .caret {
    margin-right: 3px;
}

.namebox {
    width: 84px;
}

.dots {
    width: 2px;
    height: 10px;
    margin: 0 8px;
    background: repeating-linear-gradient(#444 0, #444 2px, transparent 2px, transparent 4px);
}

.fx {
    display: flex;
    align-items: center;
    justify-content: space-between;
    width: 60px;
    height: 20px;
    margin-right: 5px;
    padding: 0 4px;
    border-radius: 3px;
    background: #fff;
}

.fn {
    font: italic 700 14px "Liberation Serif", serif;
}

.formula {
    flex: 1;
}

.formula-bar .formula input {
    padding-left: 8px;
}

/* worksheet */
.sheet {
    flex: 1;
    display: flex;
    min-height: 0;
}

.grid-area {
    position: relative;
    flex: 1;
    overflow: hidden;
    background: #fefefc;
}

.grid {
    table-layout: fixed;
    width: 1298px;
    border-collapse: collapse;
    font: 20px/22px "Liberation Serif", "Times New Roman", serif;
    color: #111;
}

.w-num { width: 21px; }
.w-a { width: 53px; }
.w-b { width: 332px; }
.w-c { width: 83px; }
.w-d { width: 96px; }
.w-e { width: 92px; }
.w-f { width: 90px; }
.w-k { width: 91px; }

.grid th {
    padding: 0 0 2px;
    border: 1px solid #dfe2df;
    border-left: 0;
    background: #eef1ee;
    font: 11px/12px "Open Sans", sans-serif;
    color: #666;
    vertical-align: bottom;
    overflow: hidden;
}

.grid thead th {
    height: 14px;
    padding: 0;
    border-top: 0;
    border-bottom-color: #b5b8b5;
    vertical-align: middle;
}

.grid thead .current {
    background: #dcdedd;
    border-bottom: 2px solid #1e7e45;
    color: #1e8a4a;
}

.grid thead .corner {
    background: linear-gradient(135deg, #eef1ee 65%, #d2d5d2 65%);
}

.grid td {
    height: 25px;
    padding: 0 3px;
    border: 1px solid #444;
    text-align: right;
    white-space: nowrap;
    overflow: hidden;
}

.grid td:nth-child(2) {
    background: #eb76f5;
}

.grid td:nth-child(3) {
    text-align: left;
}

.grid .high td {
    height: 26px;
}

.grid .first th,
.grid .first td {
    height: 8px;
    padding: 0;
    border-color: #e3e5e3;
    background: #fefefc;
    line-height: 5px;
}

.grid .heading td {
    height: 26px;
    border-color: #1dcfe8;
    background: #1dcfe8;
    font-weight: 700;
    text-align: center;
}

.grid .last td {
    border-bottom-color: #444;
}

.grid .sections td {
    height: 26px;
    background: #f0c6b0;
    text-align: center;
}

.grid .sections .code {
    padding: 0;
    background: #e9a988;
}

.grid .sections .desc {
    background: #fefefc;
    font-weight: 700;
    text-align: left;
}

.grid .sections .left {
    text-align: left;
}

.grid .sections .tight {
    padding: 0;
}

.grid .sides td {
    height: 27px;
    padding: 0 2px;
    background: #a3a6a3;
    text-align: left;
}

.grid .sides td:nth-child(2),
.grid .sides td:nth-child(3) {
    background: #fefefc;
}

.cursor {
    position: absolute;
    left: 516px;
    top: 370px;
}

.vscroll {
    display: flex;
    flex-direction: column;
    align-items: center;
    gap: 10px;
    width: 16px;
    padding: 4px 0;
    background: #f3f3f3;
}

.vscroll .track {
    flex: 1;
}

.vscroll i {
    display: block;
    width: 7px;
    height: 52%;
    border-radius: 4px;
    background: #666;
}

/* sheet tabs */
.sheet-tabs {
    flex: none;
    display: flex;
    align-items: center;
    height: 27px;
}

.arrows {
    display: flex;
    gap: 21px;
    margin: 0 34px 0 20px;
}

.sheet-tabs > button {
    justify-content: center;
    width: 62px;
    height: 18px;
    border-right: 1px solid #d5d8da;
}

.sheet-tabs > button:nth-of-type(2) {
    width: 58px;
}

.sheet-tabs > .active {
    width: 54px;
    height: 24px;
    align-self: flex-start;
    border: 0;
    border-radius: 0 0 4px 4px;
    background: #fff;
    font-weight: 700;
}

.active span {
    border-bottom: 2px solid #1e7e45;
}

.sheet-tabs .add {
    width: 28px;
    margin-left: 28px;
    border: 0;
}

.sheet-tabs .dots {
    margin: 0 14px;
}

.hscroll {
    display: flex;
    align-items: center;
    gap: 4px;
    flex: 1;
    height: 14px;
    margin-right: 14px;
    padding: 0 4px;
    border-radius: 7px;
    background: #f3f3f3;
}

.hscroll .track {
    flex: 1;
}

.hscroll i {
    display: block;
    width: 56%;
    height: 8px;
    border-radius: 4px;
    background: #666;
}

/* status bar */
.status {
    flex: none;
    display: flex;
    align-items: center;
    height: 18px;
    padding: 0 6px 0 5px;
    background: #f3f3f3;
    font-size: 9px;
}

.access {
    gap: 2px;
    margin-left: 14px;
}

.views {
    display: flex;
    margin-left: auto;
}

.views button {
    justify-content: center;
    width: 33px;
    height: 18px;
}

.views .on {
    background: #dfe3e0;
}

.zoom {
    display: flex;
    align-items: center;
    gap: 4px;
    margin: 0 9px 0 4px;
    font-size: 12px;
}

.zoom input {
    appearance: none;
    width: 84px;
    height: 1px;
    background: #777;
}

.zoom input::-webkit-slider-thumb {
    appearance: none;
    width: 4px;
    height: 9px;
    background: #555;
}

/* taskbar */
.taskbar {
    flex: none;
    display: flex;
    align-items: center;
    height: 39px;
    border-top: 1px solid #b3b8bd;
    background: linear-gradient(90deg, #ccd7df 0%, #cddbe3 25%, #d8c9d6 42%, #e2ccd0 60%, #edd4cb 80%, #e8d2d2 90%, #dacdd9 100%);
}

.weather {
    gap: 8px;
    width: 236px;
    padding-left: 17px;
    font-size: 10px;
    line-height: 14px;
    text-align: left;
}

.weather em {
    font-style: normal;
    color: #666;
}

.sun {
    width: 17px;
    height: 17px;
    border-radius: 50%;
    background: linear-gradient(150deg, #f7b52f, #ea7323);
}

.apps {
    display: flex;
    align-items: center;
    padding-left: 18px;
}

.app {
    flex-direction: column;
    justify-content: center;
    width: 31px;
    height: 32px;
    margin-right: 6px;
    border-radius: 3px;
}

.app.run::after {
    content: "";
    width: 5px;
    height: 2px;
    margin: 3px 0 -5px;
    border-radius: 1px;
    background: #85757b;
}

.app.current {
    background: #f2e7e8;
}

.app.current::after {
    width: 13px;
    background: #2272a8;
}

.task-search {
    display: flex;
    align-items: center;
    gap: 9px;
    width: 182px;
    height: 25px;
    margin-right: 4px;
    padding: 0 9px;
    border-radius: 13px;
    background: #eaf0f4;
}

.task-search input {
    flex: 1;
}

.tile {
    display: flex;
    align-items: center;
    justify-content: center;
    width: 20px;
    height: 20px;
    color: #fff;
    font-weight: 700;
}

.tile.blue {
    background: #22309a;
    font-size: 14px;
}

.tile.zoomapp {
    border-radius: 8px;
    background: #1857dd;
    font-size: 6px;
}

.tray {
    display: flex;
    align-items: center;
    gap: 15px;
    margin-left: auto;
    padding-right: 16px;
    font-size: 10px;
}

.net {
    gap: 7px;
}

.clock {
    margin-right: -9px;
    line-height: 14px;
    text-align: right;
}
```
